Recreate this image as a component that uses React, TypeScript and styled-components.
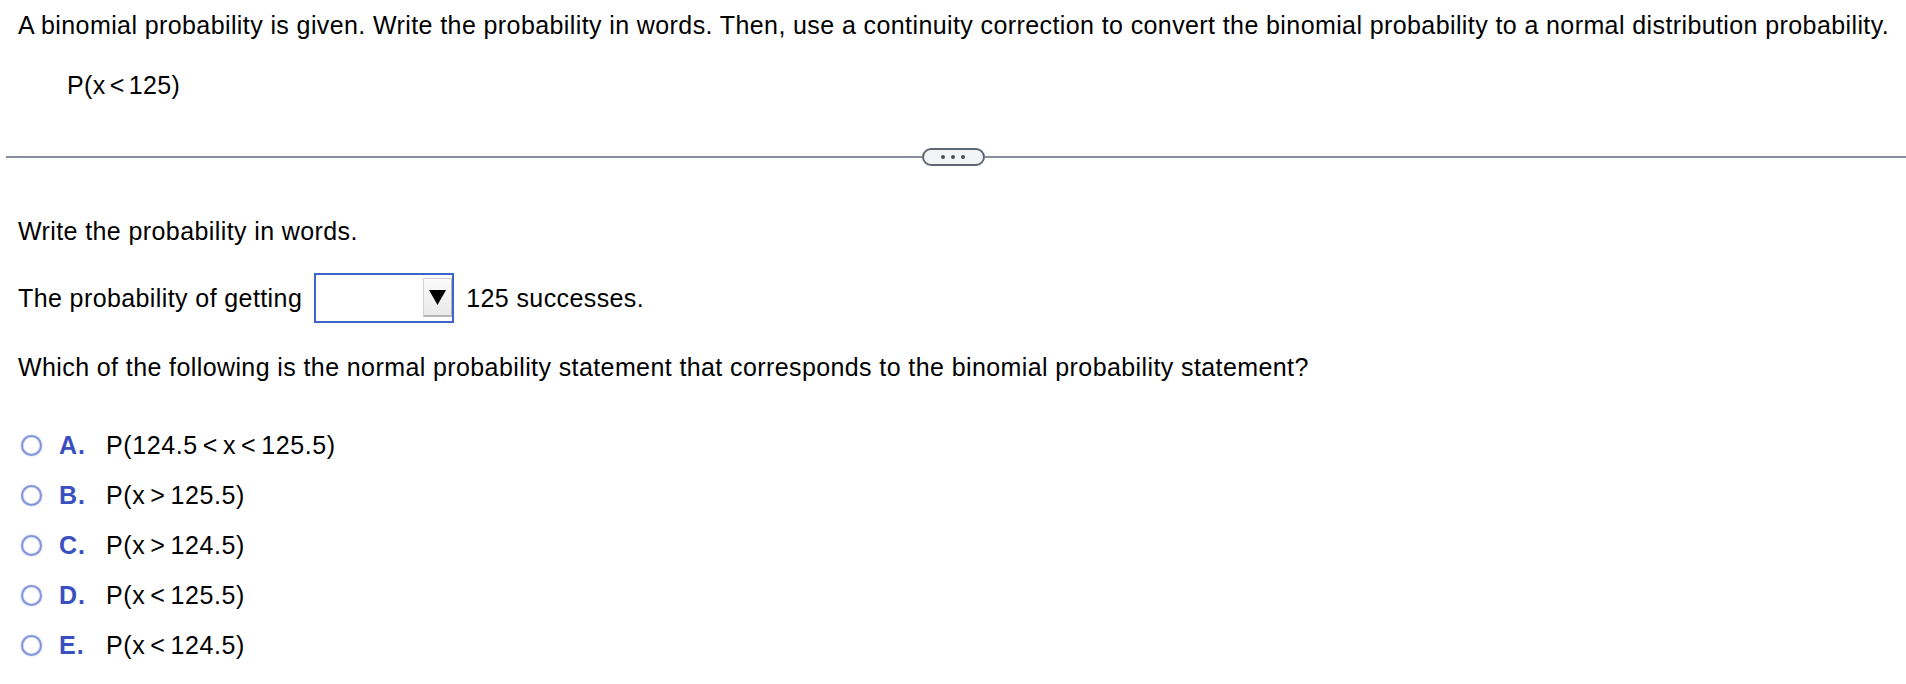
import React from "react";
import styled, { createGlobalStyle } from "styled-components";

const GlobalStyle = createGlobalStyle`
  html, body {
    margin: 0;
    padding: 0;
    background: #ffffff;
  }
  body {
    font-family: "Liberation Sans", Arial, Helvetica, sans-serif;
    font-size: 25px;
    line-height: 28px;
    letter-spacing: 0.4px;
    color: #000000;
  }
`;

const Page = styled.div`
  width: 1906px;
  height: 684px;
  padding-top: 11px;
  box-sizing: border-box;
  overflow: hidden;
`;

const Text = styled.p<{ $indent?: number; $gap?: number }>`
  margin: ${({ $gap }) => `${$gap ?? 0}px`} 0 0;
  padding-left: ${({ $indent }) => `${$indent ?? 18}px`};
  white-space: nowrap;
`;

const Op = styled.span<{ $pad?: number }>`
  padding: 0 ${({ $pad }) => `${$pad ?? 4}px`};
`;

const Divider = styled.div`
  display: flex;
  align-items: center;
  margin-top: 49px;
  height: 18px;
`;

const Rule = styled.div<{ $inset?: number }>`
  flex: 1;
  height: 2px;
  background: ${({ $inset }) =>
    `linear-gradient(to right, transparent ${$inset ?? 0}px, #868e9b ${$inset ?? 0}px)`};
`;

const MorePill = styled.button`
  display: flex;
  align-items: center;
  justify-content: center;
  gap: 6px;
  width: 63px;
  height: 18px;
  padding: 0;
  box-sizing: border-box;
  border: 2px solid #5f6773;
  border-radius: 9px;
  background: #f3f4f6;
`;

const Dot = styled.span`
  width: 4px;
  height: 4px;
  border-radius: 50%;
  background: #4a4f57;
`;

const AnswerRow = styled.div`
  display: flex;
  align-items: center;
  gap: 12px;
  margin-top: 28px;
  padding-left: 18px;
`;

const SelectBox = styled.div`
  display: flex;
  align-items: center;
  justify-content: flex-end;
  width: 140px;
  height: 50px;
  box-sizing: border-box;
  border: 2px solid #3d66c8;
  padding-bottom: 1px;
  background: #ffffff;
`;

const SelectButton = styled.div`
  display: flex;
  align-items: center;
  justify-content: center;
  width: 29px;
  height: 39px;
  box-sizing: border-box;
  border: 1px solid #d2d2d2;
  border-right-color: #b5b5b5;
  border-bottom: 2px solid #b5b5b5;
  background: linear-gradient(to bottom, #fbfbfb, #e9e9e9);
`;

const Options = styled.div`
  display: flex;
  flex-direction: column;
  margin-top: 39px;
`;

const Option = styled.label`
  display: flex;
  align-items: center;
  height: 50px;
  padding-left: 21px;
  letter-spacing: 0.6px;
`;

const Radio = styled.span`
  width: 21px;
  height: 21px;
  box-sizing: border-box;
  border-radius: 50%;
  border: 2.5px solid #8295da;
  box-shadow: 0 0 1.5px rgba(120, 140, 215, 0.8), inset 0 0 1.5px rgba(120, 140, 215, 0.8);
  margin-right: 17px;
`;

const Letter = styled.span`
  width: 47px;
  font-weight: bold;
  letter-spacing: 1px;
  color: #3a4fc0;
`;

const options: { letter: string; parts: string[] }[] = [
  { letter: "A.", parts: ["P(124.5", "<", "x", "<", "125.5)"] },
  { letter: "B.", parts: ["P(x", ">", "125.5)"] },
  { letter: "C.", parts: ["P(x", ">", "124.5)"] },
  { letter: "D.", parts: ["P(x", "<", "125.5)"] },
  { letter: "E.", parts: ["P(x", "<", "124.5)"] },
];

const Expr = ({ parts, pad }: { parts: string[]; pad?: number }) => (
  <span>
    {parts.map((p, i) =>
      p === "<" || p === ">" ? (
        <Op key={i} $pad={pad}>
          {p}
        </Op>
      ) : (
        <span key={i}>{p}</span>
      )
    )}
  </span>
);

export default function App() {
  return (
    <>
      <GlobalStyle />
      <Page>
        <Text>
          A binomial probability is given. Write the probability in words. Then, use a continuity correction to
          convert the binomial probability to a normal distribution probability.
        </Text>
        <Text $indent={67} $gap={32}>
          <Expr parts={["P(x", "<", "125)"]} />
        </Text>

        <Divider>
          <Rule $inset={6} />
          <MorePill aria-label="More">
            <Dot />
            <Dot />
            <Dot />
          </MorePill>
          <Rule />
        </Divider>

        <Text $gap={51}>Write the probability in words.</Text>

        <AnswerRow>
          <span>The probability of getting</span>
          <SelectBox>
            <SelectButton>
              <svg width="17" height="15" viewBox="0 0 17 15">
                <polygon points="0,0 17,0 8.5,15" fill="#000" />
              </svg>
            </SelectButton>
          </SelectBox>
          <span>125 successes.</span>
        </AnswerRow>

        <Text $gap={30}>
          Which of the following is the normal probability statement that corresponds to the binomial probability
          statement?
        </Text>

        <Options>
          {options.map((o) => (
            <Option key={o.letter}>
              <Radio />
              <Letter>{o.letter}</Letter>
              <Expr parts={o.parts} pad={5} />
            </Option>
          ))}
        </Options>
      </Page>
    </>
  );
}
